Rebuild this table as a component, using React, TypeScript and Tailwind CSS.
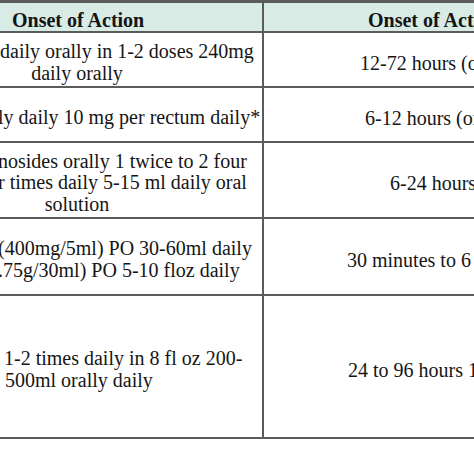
const rule = "border-[#5b5b5b]";

function Line({ children, className = "" }: { children: React.ReactNode; className?: string }) {
  return <div className={`whitespace-nowrap leading-[21.5px] ${className}`}>{children}</div>;
}

export default function App() {
  return (
    <div
      className="w-[474px] h-[474px] overflow-hidden bg-white text-[20px] text-[#151515]"
      style={{ fontFamily: '"Liberation Serif", serif' }}
    >
      <div className={`border-t-[3px] border-[#3c3c3c] bg-[#d9ebe5] flex h-[33px] border-b-2 ${rule}`}>
        <div className={`w-[264px] shrink-0 border-r-2 ${rule} flex items-center pl-[12px] pt-[5px] font-bold`}>
          Onset of Action
        </div>
        <div className="flex items-center pl-[104px] pt-[5px] font-bold whitespace-nowrap">Onset of Action</div>
      </div>

      <div className={`flex h-[55px] border-b-2 ${rule}`}>
        <div className={`w-[264px] shrink-0 border-r-2 ${rule} flex flex-col justify-center pt-[6px]`}>
          <Line>daily orally in 1-2 doses 240mg</Line>
          <Line className="w-[154px] text-center">daily orally</Line>
        </div>
        <div className="flex items-center pl-[96px] pt-[6px] whitespace-nowrap">12-72 hours (oral)</div>
      </div>

      <div className={`flex h-[55px] border-b-2 ${rule}`}>
        <div className={`w-[264px] shrink-0 border-r-2 ${rule} flex flex-col justify-center pt-[6px]`}>
          <Line className="-ml-[2px]">ly daily 10 mg per rectum daily*</Line>
        </div>
        <div className="flex items-center pl-[101px] pt-[6px] whitespace-nowrap">6-12 hours (oral)</div>
      </div>

      <div className={`flex h-[76px] border-b-2 ${rule}`}>
        <div className={`w-[264px] shrink-0 border-r-2 ${rule} flex flex-col justify-center pt-[6px]`}>
          <Line className="-ml-[2px]">nosides orally 1 twice to 2 four</Line>
          <Line className="-ml-[2px]">r times daily 5-15 ml daily oral</Line>
          <Line className="w-[154px] text-center">solution</Line>
        </div>
        <div className="flex items-center pl-[126px] pt-[6px] whitespace-nowrap">6-24 hours</div>
      </div>

      <div className={`flex h-[77px] border-b-2 ${rule}`}>
        <div className={`w-[264px] shrink-0 border-r-2 ${rule} flex flex-col justify-center pt-[6px]`}>
          <Line className="-ml-[2px]">(400mg/5ml) PO 30-60ml daily</Line>
          <Line className="-ml-[2px]">.75g/30ml) PO 5-10 floz daily</Line>
        </div>
        <div className="flex items-center pl-[83px] pt-[6px] whitespace-nowrap">30 minutes to 6 hours</div>
      </div>

      <div className={`flex h-[143px] border-b-2 ${rule}`}>
        <div className={`w-[264px] shrink-0 border-r-2 ${rule} flex flex-col justify-center pt-[6px]`}>
          <Line className="pl-[4px]">1-2 times daily in 8 fl oz 200-</Line>
          <Line className="pl-[5px]">500ml orally daily</Line>
        </div>
        <div className="flex items-center pl-[84px] pt-[6px] whitespace-nowrap">24 to 96 hours 1-4 days</div>
      </div>
    </div>
  );
}
